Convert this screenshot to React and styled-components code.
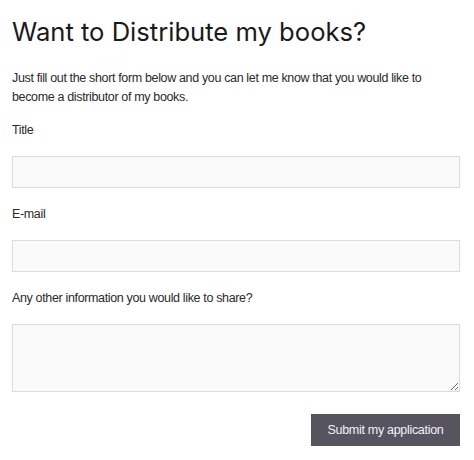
import React from 'react'
import styled, { createGlobalStyle } from 'styled-components'

const GlobalStyle = createGlobalStyle`
  * { box-sizing: border-box; }
  body {
    margin: 0;
    background: #ffffff;
    font-family: "Liberation Sans", Arial, sans-serif;
    color: #1f1f1f;
  }
`

const Page = styled.div`
  padding: 14px 14px 0 12px;
  width: 474px;
`

const Heading = styled.h1`
  margin: 0;
  font-family: Inter, "Noto Sans", sans-serif;
  font-size: 25.6px;
  font-weight: 400;
  line-height: 36px;
  color: #1a1a1a;
`

const Intro = styled.p`
  margin: 19px 0 0;
  font-size: 12.5px;
  line-height: 19px;
  letter-spacing: -0.35px;
  color: #2a2a2a;
`

const Form = styled.form`
  display: flex;
  flex-direction: column;
  margin-top: 14px;
`

const Field = styled.div`
  display: flex;
  flex-direction: column;
  margin-bottom: 17px;
`

const Label = styled.label`
  font-size: 12.5px;
  line-height: 19px;
  letter-spacing: -0.35px;
  color: #2a2a2a;
  margin-bottom: 16px;
`

const Input = styled.input`
  height: 32px;
  width: 100%;
  border: 1px solid #dcdcdc;
  background: #fafafa;
  font: inherit;
  padding: 0 8px;
  outline: none;
`

const TextArea = styled.textarea`
  height: 68px;
  width: 100%;
  border: 1px solid #dcdcdc;
  background: #fafafa;
  font: inherit;
  padding: 6px 8px;
  resize: vertical;
  outline: none;
`

const Actions = styled.div`
  display: flex;
  justify-content: flex-end;
  margin-top: 5px;
`

const SubmitButton = styled.button`
  height: 32px;
  width: 149px;
  border: none;
  background: #55545f;
  color: #f2f2f4;
  font-family: "Liberation Sans", Arial, sans-serif;
  font-size: 12.5px;
  letter-spacing: -0.3px;
  cursor: pointer;
`

export default function App() {
  return (
    <>
      <GlobalStyle />
      <Page>
        <Heading>Want to Distribute my books?</Heading>
        <Intro>
          Just fill out the short form below and you can let me know that you would like to
          become a distributor of my books.
        </Intro>
        <Form onSubmit={e => e.preventDefault()}>
          <Field>
            <Label htmlFor="title">Title</Label>
            <Input id="title" type="text" />
          </Field>
          <Field>
            <Label htmlFor="email">E-mail</Label>
            <Input id="email" type="email" />
          </Field>
          <Field>
            <Label htmlFor="info">Any other information you would like to share?</Label>
            <TextArea id="info" />
          </Field>
          <Actions>
            <SubmitButton type="submit">Submit my application</SubmitButton>
          </Actions>
        </Form>
      </Page>
    </>
  )
}
